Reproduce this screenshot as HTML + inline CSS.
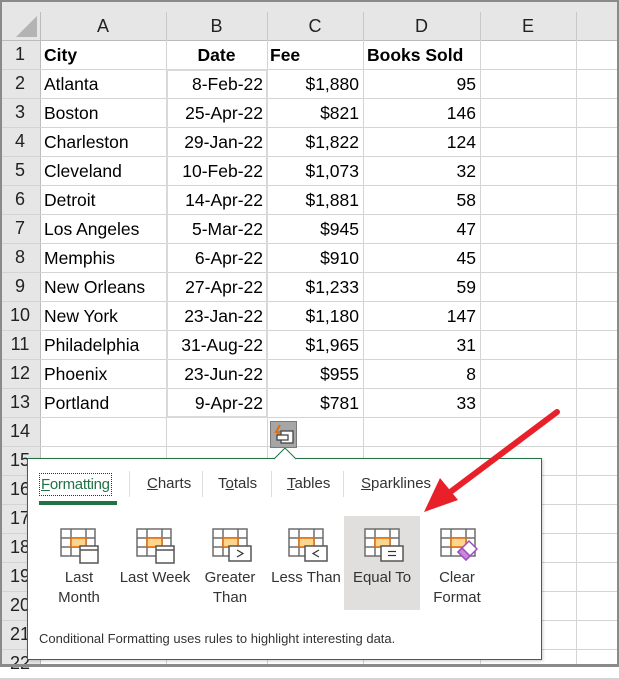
<!DOCTYPE html>
<html><head><meta charset="utf-8"><style>
*{margin:0;padding:0;box-sizing:border-box}
body{width:619px;height:667px;overflow:hidden;background:#fff;font-family:"Liberation Sans",Arial,sans-serif;position:relative}
.a{position:absolute}
.hl{position:absolute;height:1px;background:#d4d4d4}
.vl{position:absolute;width:1px;background:#d4d4d4}
.c{position:absolute;height:29px;line-height:29px;font-size:17.5px;color:#000;white-space:nowrap}
.rh{position:absolute;left:0;width:40px;height:29px;line-height:29px;font-size:18px;text-align:center;color:#222}
.ch{position:absolute;top:12px;height:28px;line-height:28px;font-size:18px;text-align:center;color:#222}
.tab{position:absolute;top:475px;font-size:15px;color:#333}
.lbl{position:absolute;top:568px;font-size:15px;color:#333;text-align:center;line-height:20px}
</style></head><body>
<div class="a" style="left:0;top:0;width:619px;height:40px;background:#e6e6e6"></div>
<div class="a" style="left:0;top:0;width:40px;height:667px;background:#e6e6e6"></div>
<svg class="a" style="left:16px;top:16px" width="22" height="22"><polygon points="21,0 21,21 0,21" fill="#b4b4b4"/></svg>
<div class="a" style="left:0;top:40px;width:619px;height:1px;background:#bcbcbc"></div>
<div class="a" style="left:40px;top:12px;width:1px;height:655px;background:#bcbcbc"></div>
<div class="ch" style="left:40px;width:126px">A</div>
<div class="ch" style="left:166px;width:101px">B</div>
<div class="ch" style="left:267px;width:96px">C</div>
<div class="ch" style="left:363px;width:117px">D</div>
<div class="ch" style="left:480px;width:96px">E</div>
<div class="vl" style="left:166px;top:12px;height:28px;background:#c8c8c8"></div>
<div class="vl" style="left:267px;top:12px;height:28px;background:#c8c8c8"></div>
<div class="vl" style="left:363px;top:12px;height:28px;background:#c8c8c8"></div>
<div class="vl" style="left:480px;top:12px;height:28px;background:#c8c8c8"></div>
<div class="vl" style="left:576px;top:12px;height:28px;background:#c8c8c8"></div>
<div class="vl" style="left:166px;top:40px;height:627px"></div>
<div class="vl" style="left:267px;top:40px;height:627px"></div>
<div class="vl" style="left:363px;top:40px;height:627px"></div>
<div class="vl" style="left:480px;top:40px;height:627px"></div>
<div class="vl" style="left:576px;top:40px;height:627px"></div>
<div id="rows"></div>
<script>
var h='';
for(var i=1;i<=22;i++){var t=40+i*29;h+='<div class="hl" style="left:0;top:'+t+'px;width:619px"></div>';h+='<div class="rh" style="top:'+(40+(i-1)*29)+'px">'+i+'</div>';}
var d=[["Atlanta","8-Feb-22","$1,880","95"],["Boston","25-Apr-22","$821","146"],["Charleston","29-Jan-22","$1,822","124"],["Cleveland","10-Feb-22","$1,073","32"],["Detroit","14-Apr-22","$1,881","58"],["Los Angeles","5-Mar-22","$945","47"],["Memphis","6-Apr-22","$910","45"],["New Orleans","27-Apr-22","$1,233","59"],["New York","23-Jan-22","$1,180","147"],["Philadelphia","31-Aug-22","$1,965","31"],["Phoenix","23-Jun-22","$955","8"],["Portland","9-Apr-22","$781","33"]];
h+='<div class="c" style="left:44px;top:41px;font-weight:bold">City</div><div class="c" style="left:166px;width:101px;text-align:center;top:41px;font-weight:bold">Date</div><div class="c" style="left:270px;top:41px;font-weight:bold">Fee</div><div class="c" style="left:367px;top:41px;font-weight:bold">Books Sold</div>';
for(var j=0;j<d.length;j++){var y=41+(j+1)*29;
h+='<div class="c" style="left:44px;top:'+y+'px">'+d[j][0]+'</div>';
h+='<div class="c" style="left:166px;width:97px;text-align:right;top:'+y+'px">'+d[j][1]+'</div>';
h+='<div class="c" style="left:267px;width:92px;text-align:right;top:'+y+'px">'+d[j][2]+'</div>';
h+='<div class="c" style="left:363px;width:113px;text-align:right;top:'+y+'px">'+d[j][3]+'</div>';}
document.getElementById('rows').innerHTML=h;
</script>
<div class="a" style="left:166px;top:69px;width:102px;height:349px;border:2px solid #d9d9d9"></div>
<div class="a" style="left:0;top:0;width:619px;height:667px;border:2px solid #8a8a8a;border-bottom-width:3px"></div>
<div class="a" style="left:270px;top:421px;width:27px;height:27px;background:#a6a6a6;border:1px solid #7a7a7a"></div>
<svg class="a" style="left:272px;top:423px" width="24" height="24"><path d="M8 2 L4 9 L7 9 L5 14" stroke="#e46c0a" stroke-width="2" fill="none"/><rect x="9" y="8" width="12" height="12" fill="#fff" stroke="#444" stroke-width="1.3"/><rect x="5" y="12" width="11" height="5" fill="#fff" stroke="#444" stroke-width="1.3"/></svg>
<div class="a" style="left:27px;top:458px;width:515px;height:202px;background:#fff;border:1px solid #217346;box-shadow:1px 1px 3px rgba(0,0,0,.2)"></div>
<svg class="a" style="left:274px;top:448px" width="24" height="12"><polygon points="0,11 11,0 22,11" fill="#fff"/><polyline points="0,11 11,0 22,11" fill="none" stroke="#217346" stroke-width="1"/></svg>
<div class="tab" style="left:39px;top:473px;padding:2px 1px;border:1px dotted #333;color:#217346;letter-spacing:-0.3px"><u>F</u>ormatting</div>
<div class="a" style="left:39px;top:501px;width:78px;height:4px;background:#217346"></div>
<div class="a" style="left:129px;top:471px;width:1px;height:26px;background:#ddd"></div>
<div class="tab" style="left:147px"><u>C</u>harts</div>
<div class="a" style="left:202px;top:471px;width:1px;height:26px;background:#ddd"></div>
<div class="tab" style="left:218px">T<u>o</u>tals</div>
<div class="a" style="left:271px;top:471px;width:1px;height:26px;background:#ddd"></div>
<div class="tab" style="left:287px"><u>T</u>ables</div>
<div class="a" style="left:343px;top:471px;width:1px;height:26px;background:#ddd"></div>
<div class="tab" style="left:361px"><u>S</u>parklines</div>
<div class="a" style="left:344px;top:516px;width:76px;height:94px;background:#e1dfdd"></div>
<svg class="a" style="left:0;top:0" width="619" height="667">
<defs><g id="g"><rect x="0" y="0" width="34" height="27" fill="#fff" stroke="#6d6d6d" stroke-width="1.5"/><line x1="0" y1="9" x2="34" y2="9" stroke="#6d6d6d" stroke-width="1.5"/><line x1="0" y1="18" x2="34" y2="18" stroke="#6d6d6d" stroke-width="1.5"/><line x1="10" y1="0" x2="10" y2="27" stroke="#6d6d6d" stroke-width="1.5"/><line x1="25" y1="0" x2="25" y2="27" stroke="#6d6d6d" stroke-width="1.5"/><rect x="10" y="9" width="15" height="9" fill="#fcd68f" stroke="#e46c0a" stroke-width="1.5"/></g></defs>
<g transform="translate(61,529)"><use href="#g"/><rect x="19" y="17" width="18" height="17" fill="#fff" stroke="#555" stroke-width="1.5"/><line x1="19" y1="21" x2="37" y2="21" stroke="#555" stroke-width="1.5"/></g>
<g transform="translate(137,529)"><use href="#g"/><rect x="19" y="17" width="18" height="17" fill="#fff" stroke="#555" stroke-width="1.5"/><line x1="19" y1="21" x2="37" y2="21" stroke="#555" stroke-width="1.5"/></g>
<g transform="translate(213,529)"><use href="#g"/><rect x="16" y="17" width="22" height="15" fill="#fff" stroke="#555" stroke-width="1.5"/><path d="M24 21 L30 24.5 L24 28" fill="none" stroke="#333" stroke-width="1.2"/></g>
<g transform="translate(289,529)"><use href="#g"/><rect x="16" y="17" width="22" height="15" fill="#fff" stroke="#555" stroke-width="1.5"/><path d="M30 21 L24 24.5 L30 28" fill="none" stroke="#333" stroke-width="1.2"/></g>
<g transform="translate(365,529)"><use href="#g"/><rect x="16" y="17" width="22" height="15" fill="#fff" stroke="#555" stroke-width="1.5"/><line x1="23" y1="22.5" x2="31" y2="22.5" stroke="#333" stroke-width="1.2"/><line x1="23" y1="26.5" x2="31" y2="26.5" stroke="#333" stroke-width="1.2"/></g>
<g transform="translate(441,529)"><use href="#g"/><path d="M28 12 L36 20 L25 31 L17 23 Z" fill="#fff" stroke="#a04cc0" stroke-width="1.5"/><path d="M21 19 L29 27 L25 31 L17 23 Z" fill="#c58ad8" stroke="#a04cc0" stroke-width="1.5"/></g>
<line x1="557" y1="412" x2="445" y2="496" stroke="#e8202a" stroke-width="6" stroke-linecap="round"/>
<polygon points="424,512 440,478 458,500" fill="#e8202a"/>
</svg>
<div class="lbl" style="left:44px;width:70px">Last<br>Month</div>
<div class="lbl" style="left:113px;width:84px">Last Week</div>
<div class="lbl" style="left:195px;width:70px">Greater<br>Than</div>
<div class="lbl" style="left:266px;width:80px">Less Than</div>
<div class="lbl" style="left:342px;width:80px">Equal To</div>
<div class="lbl" style="left:422px;width:70px">Clear<br>Format</div>
<div class="a" style="left:39px;top:631px;font-size:13px;color:#333">Conditional Formatting uses rules to highlight interesting data.</div>
</body></html>
